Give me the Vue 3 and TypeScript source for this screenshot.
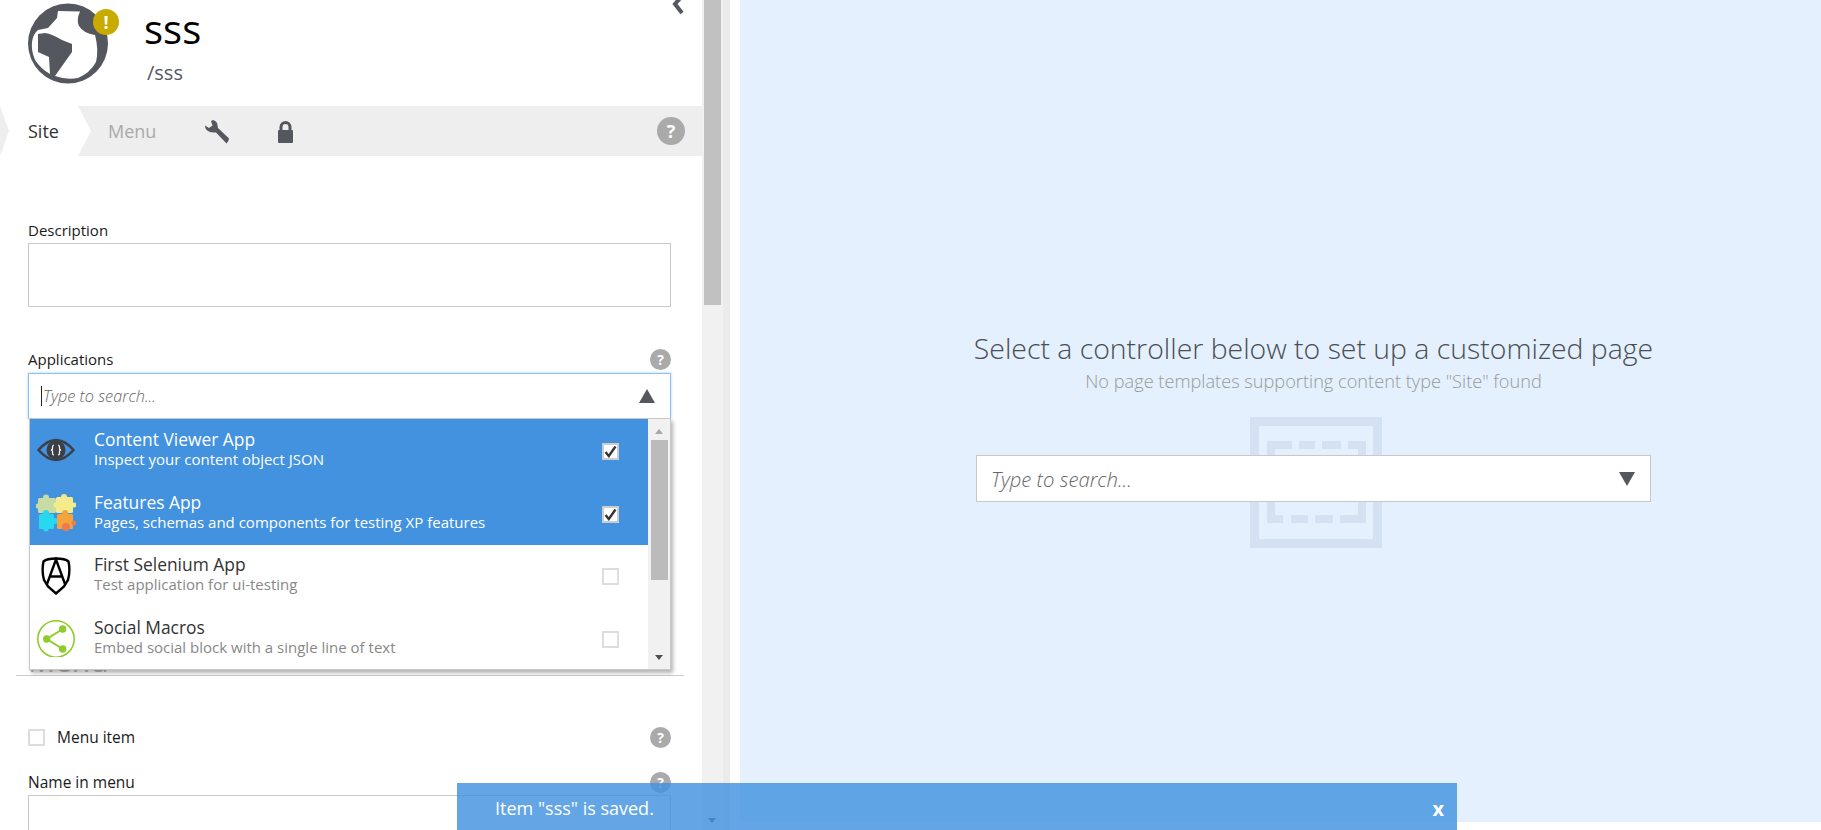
<script setup lang="ts">
interface AppRow {
  name: string
  desc: string
  selected: boolean
  icon: string
}
const rows: AppRow[] = [
  { name: 'Content Viewer App', desc: 'Inspect your content object JSON', selected: true, icon: 'eye' },
  { name: 'Features App', desc: 'Pages, schemas and components for testing XP features', selected: true, icon: 'puzzle' },
  { name: 'First Selenium App', desc: 'Test application for ui-testing', selected: false, icon: 'shield' },
  { name: 'Social Macros', desc: 'Embed social block with a single line of text', selected: false, icon: 'share' }
]
</script>

<template>
  <div class="page">
    <section class="left">
      <header class="head">
        <div class="logo">
          <svg width="84" height="84" viewBox="27 3 84 84">
            <circle cx="68" cy="43.500" r="40" fill="#54585e" />
            <path d="M58 11 L80 11.500 Q76 20 79 26 Q83 33 95 35 Q99 50 96 62 Q90 73 78 78 Q66 80 55 76 L72 52 L72 44 L62 40 Q52 34 45 33 L38 34 L38 52 L49 57 L50 74 Q41 69 35 60 Q31 50 32 42 Q33 34 38 30 L48 28 L57 18 Z" fill="#fff" />
          </svg>
          <span class="badge">!</span>
        </div>
        <div class="titles">
          <div class="title">sss</div>
          <div class="path">/sss</div>
        </div>
      </header>

      <nav class="tabs">
        <div class="tab-site">Site</div>
        <div class="tab-menu">Menu</div>
        <svg class="wrench" width="24" height="24" viewBox="0 0 24 24">
          <path d="M8 0 Q12 1 12.500 5 L13 8 L24 18.500 Q24 21 21.500 23.500 L11 12.500 Q6 13 3 11 Q0 9 0 5.500 L4 8 L7.500 5.500 L6 1 Z" fill="#54585e" />
        </svg>
        <svg class="lock" width="15" height="22" viewBox="0 0 15 22">
          <path d="M3 10 V6 a4.500 4.500 0 0 1 9 0 V10" fill="none" stroke="#54585e" stroke-width="3" />
          <rect x="0" y="9" width="15" height="13" rx="1" fill="#54585e" />
        </svg>
        <span class="help tabs-help">?</span>
      </nav>

      <div class="form">
        <label class="label desc-label">Description</label>
        <div class="textarea"></div>

        <div class="label-row apps-label">
          <label class="label">Applications</label>
          <span class="help">?</span>
        </div>
        <div class="combo">
          <span class="caret"></span><span class="placeholder">Type to search...</span>
          <span class="tri-up"></span>
          <div class="dropdown">
            <div class="list">
              <div v-for="row in rows" :key="row.name" class="row" :class="{ selected: row.selected }">
                <div class="row-icon">
                  <svg v-if="row.icon === 'eye'" width="38" height="26" viewBox="0 0 38 26">
                    <path d="M1.500 13 Q19 -7 36.500 13 Q19 33 1.500 13 Z" fill="none" stroke="#3c4046" stroke-width="2.500" />
                    <circle cx="19" cy="13" r="9.500" fill="#3c4046" />
                    <path d="M17 8 Q15.500 8 15.500 10 V12 L14.500 13 L15.500 14 V16 Q15.500 18 17 18 M21 8 Q22.500 8 22.500 10 V12 L23.500 13 L22.500 14 V16 Q22.500 18 21 18" fill="none" stroke="#fff" stroke-width="1.200" />
                  </svg>
                  <svg v-else-if="row.icon === 'puzzle'" class="puzzle" width="40" height="38" viewBox="0 0 40 38">
                    <rect x="2" y="4" width="18" height="15" rx="1.500" fill="#c9dba4" />
                    <circle cx="10" cy="3.500" r="3" fill="#c9dba4" />
                    <circle cx="2" cy="12" r="2.500" fill="#c9dba4" />
                    <rect x="20" y="3" width="17" height="16" rx="1.500" fill="#f4ec8c" />
                    <circle cx="28" cy="3" r="3" fill="#f4ec8c" />
                    <circle cx="38" cy="11" r="2.500" fill="#f4ec8c" />
                    <circle cx="20" cy="11" r="2.500" fill="#f4ec8c" />
                    <rect x="3" y="20" width="15" height="15" rx="1.500" fill="#27d8f0" />
                    <circle cx="10" cy="19" r="3" fill="#27d8f0" />
                    <circle cx="10" cy="35" r="2.500" fill="#27d8f0" />
                    <circle cx="19" cy="27" r="3" fill="#27d8f0" />
                    <rect x="21" y="20" width="16" height="15" rx="1.500" fill="#f4a43e" />
                    <circle cx="29" cy="19" r="3" fill="#f4a43e" />
                    <circle cx="38" cy="29" r="2.500" fill="#f07a50" />
                    <circle cx="30" cy="33" r="4" fill="#f07a50" />
                  </svg>
                  <svg v-else-if="row.icon === 'shield'" width="30" height="38" viewBox="0 0 30 38">
                    <path d="M15 1.500 Q24 1.500 27.500 4.500 Q29.500 14 27 23 L23 29.500 L15 36.500 L7 29.500 L3 23 Q0.500 14 2.500 4.500 Q6 1.500 15 1.500 Z" fill="none" stroke="#000" stroke-width="2.400" />
                    <path d="M6 27 L15 2.500 L24 27 M9.500 19.500 H20.500" fill="none" stroke="#000" stroke-width="2.400" />
                  </svg>
                  <svg v-else width="38" height="37" viewBox="0 0 38 37">
                    <circle cx="19" cy="19" r="18.200" fill="none" stroke="#8fcb2a" stroke-width="1.600" />
                    <path d="M25.700 9 L9.700 19 L25.700 29" fill="none" stroke="#8fcb2a" stroke-width="2" />
                    <circle cx="25.700" cy="9" r="3.700" fill="#8fcb2a" />
                    <circle cx="9.700" cy="19" r="3.700" fill="#8fcb2a" />
                    <circle cx="25.700" cy="29" r="3.700" fill="#8fcb2a" />
                  </svg>
                </div>
                <div class="row-text">
                  <div class="row-name">{{ row.name }}</div>
                  <div class="row-desc">{{ row.desc }}</div>
                </div>
                <span class="check" :class="{ on: row.selected }">
                  <svg v-if="row.selected" width="13" height="13" viewBox="0 0 13 13">
                    <path d="M1.500 7 L4.800 11 L11.500 1.500" fill="none" stroke="#333" stroke-width="2.300" />
                  </svg>
                </span>
              </div>
            </div>
            <div class="dd-scroll">
              <span class="arr-up"></span>
              <div class="dd-thumb"></div>
              <span class="arr-down"></span>
            </div>
          </div>
        </div>

        <div class="after-dropdown"></div>
        <div class="section-title">Menu</div>
        <div class="divider"></div>

        <div class="label-row menu-row">
          <span class="checkbox"></span>
          <label class="label menu-label">Menu item</label>
          <span class="help">?</span>
        </div>
        <div class="label-row name-row">
          <label class="label name-label">Name in menu</label>
          <span class="help">?</span>
        </div>
        <div class="name-input"></div>
      </div>

      <svg class="collapse" width="16" height="16" viewBox="0 0 16 16">
        <path d="M12 -4 L5 4 L12 13" fill="none" stroke="#54585e" stroke-width="4" />
      </svg>
    </section>

    <div class="scrollbar">
      <div class="thumb"></div>
      <span class="sb-down"></span>
    </div>

    <section class="right">
      <h2 class="heading">Select a controller below to set up a customized page</h2>
      <p class="sub">No page templates supporting content type "Site" found</p>
      <div class="stage">
        <svg class="ghost" width="132" height="132" viewBox="0 0 132 132">
          <rect x="4.500" y="4.500" width="123" height="122" fill="none" stroke="#d3e1f2" stroke-width="9" />
          <path d="M21 45 V28 H42 M49 28 H65 M72 28 H91 M98 28 H112 V45 M21 85 V102 H33 M41 102 H58 M65 102 H83 M90 102 H112 V85" fill="none" stroke="#d3e1f2" stroke-width="8" />
        </svg>
        <div class="page-combo">
          <span class="placeholder big">Type to search...</span>
          <span class="tri-down"></span>
        </div>
      </div>
    </section>

    <div class="toast">
      <span class="toast-text">Item "sss" is saved.</span>
      <span class="toast-x">x</span>
    </div>
  </div>
</template>

<style>
html, body { margin: 0; padding: 0; background: #fff; overflow: hidden; }
</style>

<style scoped>
.page {
  position: relative;
  display: flex;
  width: 1821px;
  height: 830px;
  overflow: hidden;
  font-family: "Open Sans", "Noto Sans", sans-serif;
  color: #000;
  background: #fff;
}
.left {
  position: relative;
  width: 702px;
  flex: none;
  height: 830px;
  overflow: hidden;
}
.head { display: flex; height: 106px; padding-left: 27px; box-sizing: border-box; }
.logo { position: relative; width: 84px; height: 84px; margin-top: 3px; }
.badge {
  position: absolute;
  left: 66px;
  top: 6px;
  width: 26px;
  height: 26px;
  border-radius: 50%;
  background: #c9ab00;
  color: #fff;
  font-weight: 700;
  font-size: 18px;
  line-height: 26px;
  text-align: center;
}
.titles { padding-left: 33px; }
.title { font-size: 40px; line-height: 40px; margin-top: 9px; }
.path { font-size: 20px; line-height: 24px; color: #54585e; margin-top: 12px; margin-left: 3px; }
.tabs {
  display: flex;
  align-items: center;
  height: 50px;
  background: #eee;
  position: relative;
}
.tab-site {
  width: 91px;
  height: 50px;
  flex: none;
  box-sizing: border-box;
  background: #fff;
  clip-path: polygon(0 0, 78px 0, 91px 25px, 78px 50px, 0 50px, 9px 25px);
  padding-left: 28px;
  font-size: 18px;
  line-height: 50px;
  color: #333;
  position: relative;
}
.tab-menu { margin-left: 17px; width: 60px; font-size: 18px; color: #aaa; flex: none; }
.wrench { margin-left: 37px; margin-top: 2px; flex: none; }
.lock { margin-left: 49px; margin-top: 2px; flex: none; }
.help {
  display: block;
  flex: none;
  width: 21px;
  height: 21px;
  border-radius: 50%;
  background: #aaa;
  color: #fff;
  font-size: 14px;
  font-weight: 700;
  line-height: 21px;
  text-align: center;
}
.tabs-help { width: 28px; height: 28px; line-height: 28px; font-size: 18px; margin-left: auto; margin-right: 17px; }
.form { padding: 0 31px 0 28px; }
.label { font-size: 15px; line-height: 20px; color: #1a1a1a; display: block; }
.desc-label { margin-top: 64px; }
.textarea { border: 1px solid #c8c8c8; box-sizing: border-box; margin-top: 3px; height: 64px; }
.label-row { display: flex; align-items: center; justify-content: space-between; }
.apps-label { margin-top: 41px; height: 22px; margin-bottom: 3px; }
.combo {
  position: relative;
  height: 46px;
  box-sizing: border-box;
  border: 1px solid #8cc0f0;
  box-shadow: 0 0 3px #b6d8f8;
  display: flex;
  align-items: center;
  padding-left: 12px;
}
.caret { width: 1px; height: 20px; background: #222; margin-right: 1px; }
.placeholder { font-style: italic; font-weight: 300; font-size: 16.3px; color: #666; }
.placeholder.big { font-size: 20.3px; }
.tri-up {
  position: absolute;
  right: 15px;
  top: 15px;
  border-left: 8px solid transparent;
  border-right: 8px solid transparent;
  border-bottom: 14px solid #54585e;
}
.dropdown {
  position: absolute;
  left: 0;
  top: 44px;
  right: -1px;
  height: 252px;
  background: #fff;
  border: 1px solid #c8c8c8;
  box-sizing: border-box;
  box-shadow: 2px 3px 4px rgba(0, 0, 0, 0.3);
  display: flex;
  z-index: 2;
}
.list { flex: 1; min-width: 0; overflow: hidden; }
.row { display: flex; align-items: center; height: 62.75px; position: relative; color: #333; }
.row.selected { background: #4292df; color: #fff; }
.row-icon { width: 64px; flex: none; display: flex; justify-content: center; align-items: center; padding-right: 12px; box-sizing: border-box; }
.row-text { flex: 1; min-width: 0; padding-bottom: 3px; }
.row-name { font-size: 17.4px; line-height: 20px; }
.row-desc { font-size: 15px; line-height: 20px; color: #888; }
.row.selected .row-desc { color: #fff; }
.puzzle { filter: blur(0.4px); }
.check {
  width: 17px;
  height: 17px;
  border: 2px solid #ddd;
  box-sizing: border-box;
  background: transparent;
  margin-right: 29px;
  margin-top: 2px;
  display: flex;
  align-items: center;
  justify-content: center;
  flex: none;
}
.check.on { background: #fff; border-color: #ccc; }
.dd-scroll {
  width: 22px;
  flex: none;
  background: #f1f1f1;
  position: relative;
}
.dd-thumb { position: absolute; left: 3px; width: 17px; top: 21px; height: 140px; background: #bbb; }
.arr-up {
  position: absolute; left: 7px; top: 10px;
  border-left: 4px solid transparent;
  border-right: 4px solid transparent;
  border-bottom: 5px solid #a8a8a8;
}
.arr-down {
  position: absolute; left: 7px; bottom: 9px;
  border-left: 4px solid transparent;
  border-right: 4px solid transparent;
  border-top: 5px solid #505050;
}
.after-dropdown { height: 224px; }
.section-title { height: 32px; font-size: 30px; line-height: 36px; color: #bbb; }
.divider { height: 1px; background: #ccc; margin: 0 -13px 0 -12px; }
.menu-row { margin-top: 50px; height: 22px; justify-content: flex-start; }
.menu-row .help { margin-left: auto; }
.checkbox { width: 17px; height: 17px; border: 2px solid #ddd; box-sizing: border-box; }
.menu-label { margin-left: 12px; font-size: 15.5px; }
.name-row { margin-top: 22px; height: 24px; }
.name-label { font-size: 15.5px; }
.name-input { height: 60px; border: 1px solid #c8c8c8; margin-top: 1px; box-sizing: border-box; }
.collapse { position: absolute; left: 670px; top: 0; }
.scrollbar {
  width: 28px;
  flex: none;
  height: 830px;
  box-sizing: border-box;
  padding-left: 2px;
  background: #f1f1f1;
  border-right: 7px solid #ebebeb;
  position: relative;
}
.thumb { width: 17px; height: 305px; background: #c1c1c1; }
.sb-down {
  position: absolute; left: 6px; top: 818px;
  border-left: 4px solid transparent;
  border-right: 4px solid transparent;
  border-top: 5px solid #505050;
}
.right {
  margin-left: 10px;
  flex: 1;
  height: 822px;
  box-sizing: border-box;
  padding-left: 66px;
  background: #e4f0fd;
  display: flex;
  flex-direction: column;
  align-items: center;
}
.heading {
  margin: 330px 0 0;
  font-size: 28.4px;
  line-height: 36px;
  font-weight: 300;
  color: #4a4e54;
}
.sub { margin: 4px 0 0; font-size: 18.2px; line-height: 22px; font-weight: 300; color: #999; }
.stage { position: relative; width: 675px; height: 132px; margin-top: 25px; display: flex; align-items: center; justify-content: center; }
.ghost { display: block; margin-left: 5px; }
.page-combo {
  position: absolute;
  left: 0;
  right: 0;
  top: 38px;
  height: 47px;
  background: #fff;
  border: 1px solid #c8c8c8;
  box-sizing: border-box;
  display: flex;
  align-items: center;
  padding-left: 14px;
}
.tri-down {
  position: absolute;
  right: 15px;
  top: 16px;
  border-left: 8px solid transparent;
  border-right: 8px solid transparent;
  border-top: 14px solid #54585e;
}
.toast {
  position: absolute;
  left: 457px;
  bottom: 0;
  width: 1000px;
  height: 47px;
  background: rgba(66, 146, 223, 0.82);
  color: #fff;
  display: flex;
  align-items: center;
  justify-content: space-between;
  box-sizing: border-box;
  padding: 3px 13px 0 38px;
  font-size: 18px;
  z-index: 5;
}
.toast-x { font-weight: 700; font-size: 20px; }
</style>
